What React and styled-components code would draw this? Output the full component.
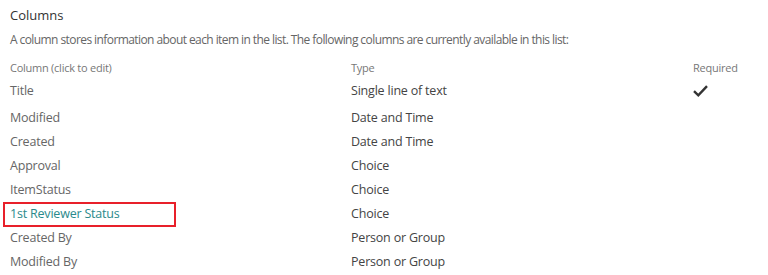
import React from "react";
import styled, { createGlobalStyle } from "styled-components";

const Global = createGlobalStyle`
  html, body { margin: 0; padding: 0; background: #fff; }
  body { font-family: "Open Sans", "Noto Sans", sans-serif; }
`;

const Page = styled.div`
  width: 768px;
  height: 275px;
  overflow: hidden;
  padding: 6px 0 0 10px;
  box-sizing: border-box;
  font-family: "Open Sans", "Noto Sans", sans-serif;
`;

const Heading = styled.div`
  font-size: 13px;
  line-height: 18px;
  color: #333;
`;

const Description = styled.div`
  margin-top: 7px;
  font-size: 12px;
  line-height: 18px;
  color: #666;
  letter-spacing: -0.58px;
`;

const Table = styled.div`
  margin-top: 7px;
  display: grid;
  grid-template-columns: 341px 342px 1fr;
  grid-template-rows: 24px 26px;
  grid-auto-rows: 24px;
`;

const HeaderCell = styled.div`
  font-size: 11px;
  line-height: 24px;
  color: #777;
  letter-spacing: -0.25px;
`;

const Cell = styled.div`
  font-size: 12.5px;
  line-height: ${(p) => (p.$first ? "22px" : "24px")};
  color: ${(p) => (p.$dark ? "#444" : "#666")};
  letter-spacing: -0.2px;
  white-space: nowrap;
`;

const Highlight = styled.div`
  margin-left: -7px;
  width: 173px;
  height: 25px;
  box-sizing: border-box;
  border: 2px solid #e8202a;
  padding-left: 5px;
  line-height: 20px;
  color: #2a8a8c;
`;

const Check = styled.svg`
  display: block;
  margin-top: 5px;
  width: 15px;
  height: 12px;
`;

const rows = [
  ["Title", "Single line of text", true],
  ["Modified", "Date and Time"],
  ["Created", "Date and Time"],
  ["Approval", "Choice"],
  ["ItemStatus", "Choice"],
  ["1st Reviewer Status", "Choice", false, true],
  ["Created By", "Person or Group"],
  ["Modified By", "Person or Group"],
];

export default function App() {
  return (
    <Page>
      <Global />
      <Heading>Columns</Heading>
      <Description>
        A column stores information about each item in the list. The following columns are currently available in this list:
      </Description>
      <Table>
        <HeaderCell>Column (click to edit)</HeaderCell>
        <HeaderCell>Type</HeaderCell>
        <HeaderCell>Required</HeaderCell>
        {rows.map(([name, type, req, hl], i) => (
          <React.Fragment key={name}>
            <Cell $first={i === 0}>{hl ? <Highlight>{name}</Highlight> : name}</Cell>
            <Cell $first={i === 0} $dark>{type}</Cell>
            <Cell $first={i === 0}>
              {req && (
                <Check viewBox="0 0 15 12">
                  <path d="M1 6.2 L5.3 10.3 L14 1.2" fill="none" stroke="#333" strokeWidth="2.4" strokeLinejoin="miter" />
                </Check>
              )}
            </Cell>
          </React.Fragment>
        ))}
      </Table>
    </Page>
  );
}
